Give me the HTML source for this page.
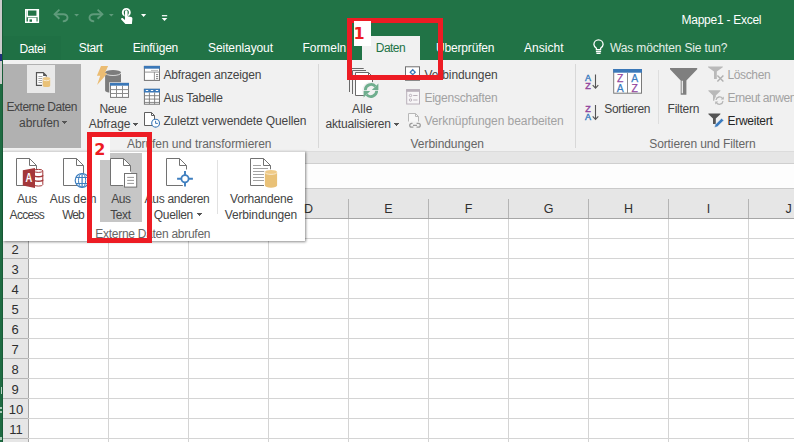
<!DOCTYPE html>
<html lang="de"><head><meta charset="utf-8"><title>Mappe1 - Excel</title>
<style>
html,body{margin:0;padding:0;}
html{overflow:hidden;background:#fff;}
body{width:794px;height:442px;overflow:hidden;position:relative;background:#fff;font-family:"Liberation Sans",sans-serif;}
div,span,svg{position:absolute;}
.t{white-space:nowrap;}
.vl{top:219px;width:1px;height:224px;background:#d4d4d4;}
.hl{left:28px;height:1px;width:766px;background:#d4d4d4;}
.hs{top:199px;width:1px;height:19px;background:#b4b4b4;}
.rs{left:3px;width:25px;height:1px;background:#b4b4b4;}
</style></head><body>
<!-- title + tabs -->
<div style="left:0;top:0;width:794px;height:60px;background:#217346"></div>
<!-- active tab -->
<div style="left:362px;top:36px;width:58px;height:24px;background:#f1f1f1"></div>
<!-- ribbon -->
<div style="left:0;top:60px;width:794px;height:91px;background:#f1f1f1"></div>
<div style="left:0;top:151px;width:794px;height:1px;background:#dcdcdc"></div>
<div style="left:0;top:152px;width:794px;height:12px;background:#e6e6e6"></div>
<!-- formula bar -->
<div style="left:0;top:163px;width:794px;height:26px;background:#fdfdfd;border-top:1px solid #cfcfcf;border-bottom:1px solid #cacaca;box-sizing:border-box"></div>
<!-- column header -->
<div style="left:0;top:189px;width:794px;height:30px;background:#e6e6e6;border-bottom:1px solid #a6a6a6;box-sizing:border-box"></div>
<!-- row header -->
<div style="left:0;top:219px;width:29px;height:223px;background:#e6e6e6;border-right:1px solid #a6a6a6;box-sizing:border-box"></div>
<div class="vl" style="left:108px"></div><div class="vl" style="left:188px"></div><div class="vl" style="left:268px"></div><div class="vl" style="left:348px"></div><div class="vl" style="left:428px"></div><div class="vl" style="left:508px"></div><div class="vl" style="left:588px"></div><div class="vl" style="left:668px"></div><div class="vl" style="left:748px"></div><div class="hl" style="top:238px"></div><div class="hl" style="top:258px"></div><div class="hl" style="top:278px"></div><div class="hl" style="top:298px"></div><div class="hl" style="top:318px"></div><div class="hl" style="top:338px"></div><div class="hl" style="top:358px"></div><div class="hl" style="top:378px"></div><div class="hl" style="top:398px"></div><div class="hl" style="top:418px"></div><div class="hl" style="top:438px"></div>
<div class="hs" style="left:28px"></div><div class="hs" style="left:108px"></div><div class="hs" style="left:188px"></div><div class="hs" style="left:268px"></div><div class="hs" style="left:348px"></div><div class="hs" style="left:428px"></div><div class="hs" style="left:508px"></div><div class="hs" style="left:588px"></div><div class="hs" style="left:668px"></div><div class="hs" style="left:748px"></div><div class="rs" style="top:238px"></div><div class="rs" style="top:258px"></div><div class="rs" style="top:278px"></div><div class="rs" style="top:298px"></div><div class="rs" style="top:318px"></div><div class="rs" style="top:338px"></div><div class="rs" style="top:358px"></div><div class="rs" style="top:378px"></div><div class="rs" style="top:398px"></div><div class="rs" style="top:418px"></div><div class="rs" style="top:438px"></div>
<!-- left strip -->
<div style="left:0;top:0;width:2px;height:442px;background:#1f6b42"></div>
<div style="left:0;top:0;width:2px;height:84px;background:#cbcbcb"></div>
<div style="left:0;top:54px;width:2px;height:7px;background:#1c2f7a"></div>
<div style="left:1px;top:387px;width:1px;height:7px;background:#b9d3c4"></div>
<div style="left:0;top:407px;width:2px;height:2px;background:#a9c9b7"></div>
<div style="left:0;top:411px;width:2px;height:2px;background:#a9c9b7"></div>
<div style="left:0;top:437px;width:2px;height:3px;background:#a9c9b7"></div>
<div style="left:2px;top:0;width:1px;height:442px;background:#185c37"></div>
<div style="left:3px;top:36px;width:58px;height:24px;background:#1f7044"></div>
<!-- Externe Daten button pressed -->
<div style="left:3px;top:64px;width:78px;height:84px;background:#b1b1b1"></div>
<div style="left:27px;top:65px;width:28.4px;height:27.6px;background:#e9e9e9"></div>
<!-- separators -->
<div style="left:318px;top:64px;width:1px;height:84px;background:#d8d8d8"></div>
<div style="left:575px;top:64px;width:1px;height:84px;background:#d8d8d8"></div>
<div style="left:658px;top:70px;width:1px;height:54px;background:#dedede"></div>
<!-- dropdown panel -->
<div style="left:3px;top:151px;width:302.2px;height:89.8px;background:#fff;box-shadow:0.5px 1px 2.4px rgba(0,0,0,.45);border-top:1px solid #d6d6d6;box-sizing:border-box"></div>
<div style="left:100px;top:153px;width:42px;height:68.8px;background:#c6c6c6"></div>
<div style="left:217px;top:160px;width:1px;height:54px;background:#e1e1e1"></div>
<svg width="794" height="442" viewBox="0 0 794 442" style="left:0;top:0" shape-rendering="auto">
<path d="M25.75,9.75H38.35V22.15H25.75Z" fill="none" stroke="#ffffff" stroke-width="1.5"/>
<path d="M27.2,9.5V16.4H37.2V9.5" fill="none" stroke="#ffffff" stroke-width="1.5"/>
<rect x="27.9" y="17.7" width="8.6" height="4.8" fill="#ffffff"/>
<rect x="29.5" y="19.4" width="2.5" height="2.4" fill="#217346"/>
<path d="M59.4,9.6L54.6,14.2L59.4,18.8" fill="none" stroke="#5f9b7b" stroke-width="1.9"/>
<path d="M55,14.2H63.2C69,14.2 69,21 62.8,21.4" fill="none" stroke="#5f9b7b" stroke-width="1.9"/>
<path d="M74.2,13.9H79L76.6,16.6Z" fill="#5f9b7b"/>
<path d="M97.6,9.6L102.4,14.2L97.6,18.8" fill="none" stroke="#5f9b7b" stroke-width="1.9"/>
<path d="M102,14.2H93.8C88,14.2 88,21 94.2,21.4" fill="none" stroke="#5f9b7b" stroke-width="1.9"/>
<path d="M108.9,13.9H113.7L111.3,16.6Z" fill="#5f9b7b"/>
<circle cx="126.3" cy="12.4" r="3.5" fill="none" stroke="#ffffff" stroke-width="1.9"/>
<path d="M125,11.6a1.3,1.3 0 0 1 2.6,0V16.2l3.6,0.9c0.9,0.3 1.3,1 1.2,1.9L131.9,24H125.4L121.2,19.4c-0.6-0.9 0.5-1.9 1.4-1.3L125,19.9Z" fill="#ffffff" stroke="#217346" stroke-width="0.9" paint-order="stroke"/>
<path d="M141,14H146.2L143.6,17Z" fill="#ffffff"/>
<rect x="161.9" y="15.1" width="5.3" height="1.2" fill="#ffffff"/>
<path d="M161.7,17.9H167.3L164.5,21Z" fill="#ffffff"/>
<path d="M596.4,49.6V48.2C594.7,47 593.9,45.9 593.9,44.5A4.6,4.6 0 0 1 603.1,44.5C603.1,45.9 602.3,47 600.6,48.2V49.6Z" fill="none" stroke="#ffffff" stroke-width="1.3"/>
<path d="M595.9,51.5H601.1M596.4,53.4H600.6" stroke="#ffffff" stroke-width="1.3"/>
<path d="M36.5,72.6H43.3L46.4,75.7V85.3H36.5Z" fill="#fff" stroke="#555" stroke-width="1.2"/>
<path d="M43.1,72.4V76H46.7Z" fill="#555"/>
<path d="M38.4,76.5H42.4M38.4,78.5H42.4M38.4,80.5H42.4M38.4,82.5H42.4" stroke="#a8a8a8" stroke-width="1"/>
<path d="M42,78.6V85.8A4.5,2 0 0 0 51,85.8V78.6A4.5,2 0 0 0 42,78.6Z" fill="#e9e9e9"/>
<path d="M42.8,78.7V85.5A3.7,1.5 0 0 0 50.2,85.5V78.7Z" fill="#e9c177"/>
<ellipse cx="46.5" cy="78.7" rx="3.7" ry="1.6" fill="#efca87"/>
<path d="M42.8,79.2A3.7,1.5 0 0 0 50.2,79.2" fill="none" stroke="#fbf3e3" stroke-width="0.8"/>
<path d="M105.1,72.6V90.4A7.95,2.7 0 0 0 121,90.4V72.6Z" fill="#7c7c7c"/>
<ellipse cx="113.05" cy="72.6" rx="7.95" ry="2.7" fill="#7c7c7c"/>
<path d="M105.1,72.8A7.95,2.7 0 0 0 121,72.8" fill="none" stroke="#e4e4e4" stroke-width="0.9"/>
<path d="M101,66.1H108.1L105,73L107.2,73.6L97.1,84.9L100.2,75.8H96.9Z" fill="#ebbc72"/>
<rect x="109.3" y="82.2" width="20.4" height="16.4" fill="#f1f1f1"/>
<rect x="110.5" y="83.4" width="18" height="14" fill="#fff" stroke="#7d7d7d" stroke-width="1"/>
<rect x="110" y="82.9" width="19" height="2.8" fill="#3b78b8"/>
<path d="M116.5,85.7V97.4M122.5,85.7V97.4M110.5,89.6H128.5M110.5,93.5H128.5" stroke="#8d8d8d" stroke-width="1"/>
<path d="M62,121h5v1h-1v1h-1v1h-1v-1h-1v-1h-1Z" fill="#555" shape-rendering="crispEdges"/>
<path d="M133,123h5v1h-1v1h-1v1h-1v-1h-1v-1h-1Z" fill="#555" shape-rendering="crispEdges"/>
<path d="M394,123h5v1h-1v1h-1v1h-1v-1h-1v-1h-1Z" fill="#555" shape-rendering="crispEdges"/>
<path d="M197,213h5v1h-1v1h-1v1h-1v-1h-1v-1h-1Z" fill="#555" shape-rendering="crispEdges"/>
<rect x="144.4" y="66.4" width="15.1" height="14" fill="#fff" stroke="#747474"/>
<rect x="143.9" y="65.9" width="16.1" height="2.8" fill="#3b78b8"/>
<path d="M144.4,72.1H159.5M154.4,72.1V80.4" stroke="#8a8a8a" stroke-width="0.9"/>
<path d="M151.5,70.4H158" stroke="#777" stroke-width="1" stroke-dasharray="1 1"/>
<path d="M156,74.6H158.2M156,76.6H158.2M156,78.6H158.2" stroke="#777" stroke-width="0.9"/>
<rect x="144.4" y="89.3" width="15.1" height="14.9" fill="#fff" stroke="#747474"/>
<rect x="143.9" y="88.8" width="16.1" height="3.7" fill="#3b78b8"/>
<path d="M145.8,90.5H148.2M150.8,90.5H153.2M155.8,90.5H158.2" stroke="#fff" stroke-width="1.1"/>
<path d="M149.4,92.5V104.2M154.6,92.5V104.2M144.4,95.7H159.5M144.4,99.1H159.5M144.4,102.4H159.5" stroke="#7a7a7a" stroke-width="0.9"/>
<path d="M144.5,112.5H151.5L154.5,115.5V125.5H144.5Z" fill="#fff" stroke="#5f5f5f" stroke-width="1"/><path d="M151.5,112.5V115.5H154.5" fill="none" stroke="#5f5f5f" stroke-width="1"/>
<circle cx="155.6" cy="123.2" r="3.9" fill="#fff" stroke="#3b78b8" stroke-width="1.1"/>
<path d="M155.6,120.8V123.4H157.8" fill="none" stroke="#3b78b8" stroke-width="1"/>
<path d="M363.7,68.5H349.5V92M366,70.5H352.5V94" fill="none" stroke="#6a6a6a"/>
<path d="M355.5,72.5H368.5L372.5,76.5V95.5H355.5Z" fill="#fff" stroke="#6a6a6a" stroke-width="1"/><path d="M368.5,72.5V76.5H372.5" fill="none" stroke="#6a6a6a" stroke-width="1"/>
<circle cx="371" cy="90.5" r="8.8" fill="#f1f1f1"/>
<path d="M365.3,90.2A5.8,5.8 0 0 1 375.4,86.4" fill="none" stroke="#6fae8e" stroke-width="2.8"/>
<path d="M378.4,83.4V90H371.8Z" fill="#6fae8e"/>
<path d="M376.7,90.8A5.8,5.8 0 0 1 366.6,94.6" fill="none" stroke="#6fae8e" stroke-width="2.8"/>
<path d="M363.6,97.6V91H370.2Z" fill="#6fae8e"/>
<rect x="405.5" y="66.8" width="14" height="13.5" fill="#fff" stroke="#6f6f6f"/>
<path d="M412.7,68.8L416.1,72.2L412.7,75.6L409.3,72.2Z" fill="#3b78b8"/><circle cx="412.7" cy="72.2" r="1.2" fill="#fff"/>
<rect x="406.7" y="89.7" width="12.8" height="14.3" fill="#f7f5f7" stroke="#b9b0ba"/>
<rect x="406.2" y="89.2" width="13.8" height="2.6" fill="#b9b0ba"/>
<circle cx="410.5" cy="95.5" r="1.2" fill="none" stroke="#b9b0ba"/><circle cx="410.5" cy="100" r="1.2" fill="none" stroke="#b9b0ba"/>
<path d="M413.2,95.5H417.5M413.2,100H417.5" stroke="#b9b0ba"/>
<path d="M408.5,113.5H415.5L418.5,116.5V126H408.5Z" fill="#f7f7f7" stroke="#b8b8b8" stroke-width="1"/><path d="M415.5,113.5V116.5H418.5" fill="none" stroke="#b8b8b8" stroke-width="1"/>
<rect x="408" y="121.5" width="13" height="7" fill="#f1f1f1"/>
<path d="M412.5,123.4H411.6a1.9,1.9 0 0 0 0,3.8H413.4M416.5,127.2H418.4a1.9,1.9 0 0 0 0,-3.8H416.6M413,125.3H417" fill="none" stroke="#9c9c9c" stroke-width="1.3"/>
<text x="587.9" y="81" font-family="Liberation Sans, sans-serif" font-size="9" font-weight="400" fill="#3b7cc0" stroke="#3b7cc0" stroke-width="0.4" text-anchor="middle">A</text>
<text x="587.9" y="88.7" font-family="Liberation Sans, sans-serif" font-size="9" font-weight="400" fill="#93479e" stroke="#93479e" stroke-width="0.4" text-anchor="middle">Z</text>
<path d="M595.5,74.4V88M592.7,85.2L595.5,88.2L598.3,85.2" fill="none" stroke="#555" stroke-width="1.1"/>
<text x="587.9" y="112" font-family="Liberation Sans, sans-serif" font-size="9" font-weight="400" fill="#93479e" stroke="#93479e" stroke-width="0.4" text-anchor="middle">Z</text>
<text x="587.9" y="119.8" font-family="Liberation Sans, sans-serif" font-size="9" font-weight="400" fill="#3b7cc0" stroke="#3b7cc0" stroke-width="0.4" text-anchor="middle">A</text>
<path d="M595.5,105V119.2M592.7,116.4L595.5,119.4L598.3,116.4" fill="none" stroke="#555" stroke-width="1.1"/>
<rect x="613.7" y="69.5" width="27.8" height="23.7" fill="#fff" stroke="#7a7a7a"/>
<rect x="613.2" y="69" width="28.8" height="3.7" fill="#3b78b8"/>
<path d="M627.5,72.7V93.2" stroke="#8a8a8a"/>
<text x="620.2" y="82.1" font-family="Liberation Sans, sans-serif" font-size="10.4" font-weight="400" fill="#93479e" stroke="#93479e" stroke-width="0.25" text-anchor="middle">Z</text>
<text x="620.2" y="91.9" font-family="Liberation Sans, sans-serif" font-size="10.4" font-weight="400" fill="#3b7cc0" stroke="#3b7cc0" stroke-width="0.25" text-anchor="middle">A</text>
<text x="634.6" y="82.1" font-family="Liberation Sans, sans-serif" font-size="10.4" font-weight="400" fill="#3b7cc0" stroke="#3b7cc0" stroke-width="0.25" text-anchor="middle">A</text>
<text x="634.6" y="91.9" font-family="Liberation Sans, sans-serif" font-size="10.4" font-weight="400" fill="#93479e" stroke="#93479e" stroke-width="0.25" text-anchor="middle">Z</text>
<path d="M670,68H697.2V69.2L686.4,80.4V94.7H680.7V80.4L670,69.2Z" fill="#7f7f7f"/>
<path d="M682.3,80.8V93.2" stroke="#eeeeee" stroke-width="1.3"/>
<path d="M708,66.4H722.8V67.2L716.8,71.60000000000001V78.9H714.0V71.60000000000001L708,67.2Z" fill="#b9b9b9"/>
<path d="M717.4,75.6L723.4,81.6M723.4,75.6L717.4,81.6" stroke="#b0b0b0" stroke-width="1.4"/>
<path d="M708.4,90.2H720.4V91.0L715.8,95.4V100.7H713.0V95.4L708.4,91.0Z" fill="#b9b9b9"/>
<circle cx="719.5" cy="100.6" r="5.2" fill="#f1f1f1"/>
<path d="M716,100A3.6,3.6 0 0 1 722.6,98.6M723,101.2A3.6,3.6 0 0 1 716.4,102.6" fill="none" stroke="#b5b5b5" stroke-width="1.3"/>
<path d="M723.8,96.6V99.6H720.8ZM715.2,104.6V101.6H718.2Z" fill="#b5b5b5"/>
<path d="M708.4,113.4H720.4V114.2L715.8,118.60000000000001V123.9H713.0V118.60000000000001L708.4,114.2Z" fill="#555555"/>
<path d="M714.4,127.6L715.2,124.6L721.6,118.2L723.8,120.4L717.4,126.8Z" fill="#3b7cc0" stroke="#f1f1f1" stroke-width="0.6"/>
<path d="M16.5,158.5H29.5L36.5,165.5V185.5H16.5Z" fill="#fff" stroke="#727272" stroke-width="1"/><path d="M29.5,158.5V165.5H36.5" fill="none" stroke="#727272" stroke-width="1"/>
<path d="M34,170.9V184.6A4.4,1.5 0 0 0 42.8,184.6V170.9Z" fill="#fff" stroke="#a4373a" stroke-width="1"/>
<ellipse cx="38.4" cy="170.9" rx="4.4" ry="1.5" fill="#fff" stroke="#a4373a" stroke-width="1"/>
<path d="M34,175.2A4.4,1.5 0 0 0 42.8,175.2M34,179.8A4.4,1.5 0 0 0 42.8,179.8" fill="none" stroke="#a4373a" stroke-width="1.5"/>
<path d="M22.8,170.2L35,167.9V188L22.8,185.6Z" fill="#a4373a"/>
<text transform="translate(28.8,181.8) scale(0.78,1)" font-family="Liberation Sans, sans-serif" font-size="12" font-weight="700" fill="#fff" text-anchor="middle">A</text>
<path d="M63.5,158.5H76.5L83.5,165.5V185.5H63.5Z" fill="#fff" stroke="#727272" stroke-width="1"/><path d="M76.5,158.5V165.5H83.5" fill="none" stroke="#727272" stroke-width="1"/>
<circle cx="82.1" cy="180.4" r="6.9" fill="#fff" stroke="#3f7fbf" stroke-width="1.2"/>
<ellipse cx="82.1" cy="180.4" rx="3.6" ry="6.9" fill="none" stroke="#3f7fbf" stroke-width="1"/>
<path d="M82.1,173.5V187.3M76,177.5H88.2M76,183.5H88.2" stroke="#3f7fbf" stroke-width="1.2"/>
<path d="M110.5,158.5H123.5L130.5,165.5V185.5H110.5Z" fill="#fff" stroke="#727272" stroke-width="1"/><path d="M123.5,158.5V165.5H130.5" fill="none" stroke="#727272" stroke-width="1"/>
<rect x="123.3" y="171.6" width="7.7" height="14.4" fill="#fff"/>
<rect x="124.5" y="173.5" width="12.2" height="13.6" fill="#fff" stroke="#727272"/>
<path d="M127.2,177.4H134M127.2,180.4H134M127.2,183.4H134" stroke="#9a9a9a"/>
<path d="M166.5,158.5H179.5L186.5,165.5V185.5H166.5Z" fill="#fff" stroke="#727272" stroke-width="1"/><path d="M179.5,158.5V165.5H186.5" fill="none" stroke="#727272" stroke-width="1"/>
<path d="M185,169.6V187.6M176,178.7H194" stroke="#fff" stroke-width="4.4"/>
<circle cx="185" cy="178.7" r="5.6" fill="#fff"/>
<circle cx="185" cy="178.7" r="3.6" fill="#fff" stroke="#3f7fbf" stroke-width="1.8"/>
<path d="M185,170.9V175.4M185,182V186.6M177.1,178.7H181.7M188.3,178.7H192.9" stroke="#3f7fbf" stroke-width="1.9"/>
<path d="M250.5,158.5H263.5L270.5,165.5V185.5H250.5Z" fill="#fff" stroke="#727272" stroke-width="1"/><path d="M263.5,158.5V165.5H270.5" fill="none" stroke="#727272" stroke-width="1"/>
<path d="M253,165.5H261M253,168.5H268M253,171.5H265M253,174.5H265M253,177.5H265M253,180.5H265" stroke="#a2a2a2"/>
<path d="M264,171.9V186A7,2.6 0 0 0 278,186V171.9A7,2.6 0 0 0 264,171.9Z" fill="#fff"/>
<path d="M264.9,172V185.6A6.1,2.1 0 0 0 277.1,185.6V172Z" fill="#e9c177"/>
<ellipse cx="271" cy="172" rx="6.1" ry="2.1" fill="#efca87"/>
<path d="M264.9,172.3A6.1,2.1 0 0 0 277.1,172.3" fill="none" stroke="#fbf3e3" stroke-width="0.8"/>
</svg>
<span class="t" style="left:681.50px;top:12.00px;font-size:12px;line-height:16px;color:#ffffff;letter-spacing:-0.260px;font-weight:400">Mappe1 - Excel</span>
<span class="t" style="left:19.60px;top:41.00px;font-size:12px;line-height:16px;color:#ffffff;letter-spacing:-0.454px;font-weight:400">Datei</span>
<span class="t" style="left:78.80px;top:40.00px;font-size:12px;line-height:16px;color:#ffffff;letter-spacing:-0.336px;font-weight:400">Start</span>
<span class="t" style="left:132.70px;top:40.00px;font-size:12px;line-height:16px;color:#ffffff;letter-spacing:-0.254px;font-weight:400">Einfügen</span>
<span class="t" style="left:208.10px;top:40.00px;font-size:12px;line-height:16px;color:#ffffff;letter-spacing:-0.104px;font-weight:400">Seitenlayout</span>
<span class="t" style="left:302.50px;top:40.00px;font-size:12px;line-height:16px;color:#ffffff;letter-spacing:-0.053px;font-weight:400">Formeln</span>
<span class="t" style="left:375.80px;top:40.00px;font-size:12px;line-height:16px;color:#217346;letter-spacing:-0.558px;font-weight:400">Daten</span>
<span class="t" style="left:436.00px;top:40.00px;font-size:12px;line-height:16px;color:#ffffff;letter-spacing:-0.172px;font-weight:400">Überprüfen</span>
<span class="t" style="left:524.00px;top:40.00px;font-size:12px;line-height:16px;color:#ffffff;letter-spacing:0.023px;font-weight:400">Ansicht</span>
<span class="t" style="left:610.00px;top:40.00px;font-size:12px;line-height:16px;color:#e4efe8;letter-spacing:-0.146px;font-weight:400">Was möchten Sie tun?</span>
<span class="t" style="left:6.50px;top:99.00px;font-size:12px;line-height:16px;color:#444444;letter-spacing:-0.477px;font-weight:400">Externe Daten</span>
<span class="t" style="left:19.00px;top:115.00px;font-size:12px;line-height:16px;color:#444444;letter-spacing:-0.034px;font-weight:400">abrufen</span>
<span class="t" style="left:99.50px;top:101.00px;font-size:12px;line-height:16px;color:#444444;letter-spacing:-0.396px;font-weight:400">Neue</span>
<span class="t" style="left:88.70px;top:116.00px;font-size:12px;line-height:16px;color:#444444;letter-spacing:-0.039px;font-weight:400">Abfrage</span>
<span class="t" style="left:163.40px;top:67.00px;font-size:12px;line-height:16px;color:#444444;letter-spacing:-0.172px;font-weight:400">Abfragen anzeigen</span>
<span class="t" style="left:163.40px;top:90.00px;font-size:12px;line-height:16px;color:#444444;letter-spacing:-0.223px;font-weight:400">Aus Tabelle</span>
<span class="t" style="left:163.40px;top:113.00px;font-size:12px;line-height:16px;color:#444444;letter-spacing:-0.120px;font-weight:400">Zuletzt verwendete Quellen</span>
<span class="t" style="left:127.00px;top:136.00px;font-size:12px;line-height:16px;color:#666666;letter-spacing:-0.064px;font-weight:400">Abrufen und transformieren</span>
<span class="t" style="left:352.00px;top:101.00px;font-size:12px;line-height:16px;color:#444444;letter-spacing:0.161px;font-weight:400">Alle</span>
<span class="t" style="left:325.40px;top:116.00px;font-size:12px;line-height:16px;color:#444444;letter-spacing:-0.148px;font-weight:400">aktualisieren</span>
<span class="t" style="left:424.40px;top:67.00px;font-size:12px;line-height:16px;color:#444444;letter-spacing:-0.071px;font-weight:400">Verbindungen</span>
<span class="t" style="left:424.40px;top:90.00px;font-size:12px;line-height:16px;color:#a2a2a2;letter-spacing:-0.230px;font-weight:400">Eigenschaften</span>
<span class="t" style="left:424.40px;top:113.00px;font-size:12px;line-height:16px;color:#a2a2a2;letter-spacing:-0.061px;font-weight:400">Verknüpfungen bearbeiten</span>
<span class="t" style="left:410.60px;top:136.00px;font-size:12px;line-height:16px;color:#666666;letter-spacing:-0.062px;font-weight:400">Verbindungen</span>
<span class="t" style="left:604.20px;top:101.00px;font-size:12px;line-height:16px;color:#444444;letter-spacing:-0.300px;font-weight:400">Sortieren</span>
<span class="t" style="left:667.60px;top:101.00px;font-size:12px;line-height:16px;color:#444444;letter-spacing:-0.257px;font-weight:400">Filtern</span>
<span class="t" style="left:727.40px;top:67.00px;font-size:12px;line-height:16px;color:#a2a2a2;letter-spacing:-0.346px;font-weight:400">Löschen</span>
<span class="t" style="left:727.40px;top:90.00px;font-size:12px;line-height:16px;color:#a2a2a2;letter-spacing:-0.463px;font-weight:400">Erneut anwenden</span>
<span class="t" style="left:727.40px;top:113.00px;font-size:12px;line-height:16px;color:#262626;letter-spacing:-0.243px;font-weight:400">Erweitert</span>
<span class="t" style="left:649.30px;top:136.00px;font-size:12px;line-height:16px;color:#666666;letter-spacing:-0.117px;font-weight:400">Sortieren und Filtern</span>
<span class="t" style="left:17.00px;top:191.00px;font-size:12px;line-height:16px;color:#444444;letter-spacing:-0.194px;font-weight:400">Aus</span>
<span class="t" style="left:9.60px;top:207.00px;font-size:12px;line-height:16px;color:#444444;letter-spacing:-0.698px;font-weight:400">Access</span>
<span class="t" style="left:49.80px;top:191.00px;font-size:12px;line-height:16px;color:#444444;letter-spacing:-0.110px;font-weight:400">Aus dem</span>
<span class="t" style="left:62.20px;top:207.00px;font-size:12px;line-height:16px;color:#444444;letter-spacing:-1.000px;font-weight:400">Web</span>
<span class="t" style="left:111.20px;top:191.00px;font-size:12px;line-height:16px;color:#444444;letter-spacing:-0.444px;font-weight:400">Aus</span>
<span class="t" style="left:110.20px;top:207.00px;font-size:12px;line-height:16px;color:#444444;letter-spacing:-0.405px;font-weight:400">Text</span>
<span class="t" style="left:144.60px;top:191.00px;font-size:12px;line-height:16px;color:#444444;letter-spacing:-0.296px;font-weight:400">Aus anderen</span>
<span class="t" style="left:153.80px;top:207.00px;font-size:12px;line-height:16px;color:#444444;letter-spacing:-0.312px;font-weight:400">Quellen</span>
<span class="t" style="left:230.10px;top:191.00px;font-size:12px;line-height:16px;color:#444444;letter-spacing:-0.193px;font-weight:400">Vorhandene</span>
<span class="t" style="left:224.70px;top:207.00px;font-size:12px;line-height:16px;color:#444444;letter-spacing:-0.134px;font-weight:400">Verbindungen</span>
<span class="t" style="left:95.30px;top:226.00px;font-size:12px;line-height:16px;color:#666666;letter-spacing:-0.277px;font-weight:400">Externe Daten abrufen</span>
<span class="t" style="left:303.98px;top:201.00px;font-size:12.5px;line-height:16px;color:#303030;letter-spacing:0.000px;font-weight:400">D</span>
<span class="t" style="left:384.33px;top:201.00px;font-size:12.5px;line-height:16px;color:#303030;letter-spacing:0.000px;font-weight:400">E</span>
<span class="t" style="left:464.68px;top:201.00px;font-size:12.5px;line-height:16px;color:#303030;letter-spacing:0.000px;font-weight:400">F</span>
<span class="t" style="left:543.63px;top:201.00px;font-size:12.5px;line-height:16px;color:#303030;letter-spacing:0.000px;font-weight:400">G</span>
<span class="t" style="left:623.98px;top:201.00px;font-size:12.5px;line-height:16px;color:#303030;letter-spacing:0.000px;font-weight:400">H</span>
<span class="t" style="left:706.76px;top:201.00px;font-size:12.5px;line-height:16px;color:#303030;letter-spacing:0.000px;font-weight:400">I</span>
<span class="t" style="left:785.38px;top:201.00px;font-size:12.5px;line-height:16px;color:#303030;letter-spacing:0.000px;font-weight:400">J</span>
<span class="t" style="left:11.58px;top:241.00px;font-size:13px;line-height:17px;color:#2e2e2e;letter-spacing:0.000px;font-weight:400">2</span>
<span class="t" style="left:11.58px;top:261.00px;font-size:13px;line-height:17px;color:#2e2e2e;letter-spacing:0.000px;font-weight:400">3</span>
<span class="t" style="left:11.58px;top:281.00px;font-size:13px;line-height:17px;color:#2e2e2e;letter-spacing:0.000px;font-weight:400">4</span>
<span class="t" style="left:11.58px;top:301.00px;font-size:13px;line-height:17px;color:#2e2e2e;letter-spacing:0.000px;font-weight:400">5</span>
<span class="t" style="left:11.58px;top:321.00px;font-size:13px;line-height:17px;color:#2e2e2e;letter-spacing:0.000px;font-weight:400">6</span>
<span class="t" style="left:11.58px;top:341.00px;font-size:13px;line-height:17px;color:#2e2e2e;letter-spacing:0.000px;font-weight:400">7</span>
<span class="t" style="left:11.58px;top:361.00px;font-size:13px;line-height:17px;color:#2e2e2e;letter-spacing:0.000px;font-weight:400">8</span>
<span class="t" style="left:11.58px;top:381.00px;font-size:13px;line-height:17px;color:#2e2e2e;letter-spacing:0.000px;font-weight:400">9</span>
<span class="t" style="left:8.77px;top:401.00px;font-size:13px;line-height:17px;color:#2e2e2e;letter-spacing:0.000px;font-weight:400">10</span>
<span class="t" style="left:9.25px;top:421.00px;font-size:13px;line-height:17px;color:#2e2e2e;letter-spacing:0.000px;font-weight:400">11</span>
<!-- red boxes -->
<div style="left:87px;top:132px;width:65.3px;height:110.5px;border:5px solid #ed1c24;box-sizing:border-box"></div>
<div style="left:92px;top:137px;width:18px;height:23.2px;background:#fff"></div>
<span class="t" style="left:94.3px;top:140px;font-size:16px;line-height:20px;color:#ed1c24;font-weight:700;font-family:'DejaVu Sans','Liberation Sans',sans-serif">2</span>
<div style="left:347px;top:18px;width:96.2px;height:61.5px;border:5px solid #ed1c24;box-sizing:border-box"></div>
<div style="left:353.8px;top:21px;width:17.2px;height:24.5px;background:#fff"></div>
<span class="t" style="left:353.4px;top:24px;font-size:16px;line-height:20px;color:#ed1c24;font-weight:700;font-family:'DejaVu Sans','Liberation Sans',sans-serif">1</span>
</body></html>
